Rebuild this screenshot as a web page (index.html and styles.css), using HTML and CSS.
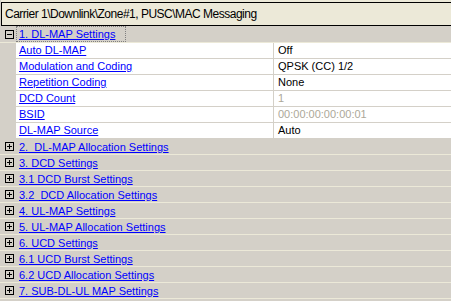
FILE: index.html
```html
<!DOCTYPE html>
<html lang="en">

<head>
    <meta charset="UTF-8">
    <title>MAC Messaging</title>
    <link rel="stylesheet" href="styles.css">
</head>

<body>
    <div class="title">Carrier 1\Downlink\Zone#1, PUSC\MAC Messaging</div>

    <div class="grid">
        <div class="cat">
            <span class="toggle"><svg width="9" height="9"><rect x="0.5" y="0.5" width="8" height="8" fill="none" stroke="#000"/><path d="M2 4.5h5" stroke="#000"/></svg></span>
            <a class="label focus" href="#">1. DL-MAP Settings</a>
        </div>
        <div class="prop">
            <span class="gutter"></span>
            <a class="name" href="#">Auto DL-MAP</a>
            <span class="value">Off</span>
        </div>
        <div class="prop">
            <span class="gutter"></span>
            <a class="name" href="#">Modulation and Coding</a>
            <span class="value">QPSK (CC) 1/2</span>
        </div>
        <div class="prop">
            <span class="gutter"></span>
            <a class="name" href="#">Repetition Coding</a>
            <span class="value">None</span>
        </div>
        <div class="prop">
            <span class="gutter"></span>
            <a class="name" href="#">DCD Count</a>
            <span class="value disabled">1</span>
        </div>
        <div class="prop">
            <span class="gutter"></span>
            <a class="name" href="#">BSID</a>
            <span class="value disabled">00:00:00:00:00:01</span>
        </div>
        <div class="prop">
            <span class="gutter"></span>
            <a class="name" href="#">DL-MAP Source</a>
            <span class="value">Auto</span>
        </div>

        <div class="cat">
            <span class="toggle"><svg width="9" height="9"><rect x="0.5" y="0.5" width="8" height="8" fill="none" stroke="#000"/><path d="M2 4.5h5M4.5 2v5" stroke="#000"/></svg></span>
            <a class="label" href="#">2.&nbsp; DL-MAP Allocation Settings</a>
        </div>
        <div class="cat">
            <span class="toggle"><svg width="9" height="9"><rect x="0.5" y="0.5" width="8" height="8" fill="none" stroke="#000"/><path d="M2 4.5h5M4.5 2v5" stroke="#000"/></svg></span>
            <a class="label" href="#">3. DCD Settings</a>
        </div>
        <div class="cat">
            <span class="toggle"><svg width="9" height="9"><rect x="0.5" y="0.5" width="8" height="8" fill="none" stroke="#000"/><path d="M2 4.5h5M4.5 2v5" stroke="#000"/></svg></span>
            <a class="label" href="#">3.1 DCD Burst Settings</a>
        </div>
        <div class="cat">
            <span class="toggle"><svg width="9" height="9"><rect x="0.5" y="0.5" width="8" height="8" fill="none" stroke="#000"/><path d="M2 4.5h5M4.5 2v5" stroke="#000"/></svg></span>
            <a class="label" href="#">3.2&nbsp; DCD Allocation Settings</a>
        </div>
        <div class="cat">
            <span class="toggle"><svg width="9" height="9"><rect x="0.5" y="0.5" width="8" height="8" fill="none" stroke="#000"/><path d="M2 4.5h5M4.5 2v5" stroke="#000"/></svg></span>
            <a class="label" href="#">4. UL-MAP Settings</a>
        </div>
        <div class="cat">
            <span class="toggle"><svg width="9" height="9"><rect x="0.5" y="0.5" width="8" height="8" fill="none" stroke="#000"/><path d="M2 4.5h5M4.5 2v5" stroke="#000"/></svg></span>
            <a class="label" href="#">5. UL-MAP Allocation Settings</a>
        </div>
        <div class="cat">
            <span class="toggle"><svg width="9" height="9"><rect x="0.5" y="0.5" width="8" height="8" fill="none" stroke="#000"/><path d="M2 4.5h5M4.5 2v5" stroke="#000"/></svg></span>
            <a class="label" href="#">6. UCD Settings</a>
        </div>
        <div class="cat">
            <span class="toggle"><svg width="9" height="9"><rect x="0.5" y="0.5" width="8" height="8" fill="none" stroke="#000"/><path d="M2 4.5h5M4.5 2v5" stroke="#000"/></svg></span>
            <a class="label" href="#">6.1 UCD Burst Settings</a>
        </div>
        <div class="cat">
            <span class="toggle"><svg width="9" height="9"><rect x="0.5" y="0.5" width="8" height="8" fill="none" stroke="#000"/><path d="M2 4.5h5M4.5 2v5" stroke="#000"/></svg></span>
            <a class="label" href="#">6.2 UCD Allocation Settings</a>
        </div>
        <div class="cat">
            <span class="toggle"><svg width="9" height="9"><rect x="0.5" y="0.5" width="8" height="8" fill="none" stroke="#000"/><path d="M2 4.5h5M4.5 2v5" stroke="#000"/></svg></span>
            <a class="label" href="#">7. SUB-DL-UL MAP Settings</a>
        </div>
    </div>
</body>

</html>
```

FILE: styles.css
```css
* {
    margin: 0;
    padding: 0;
    box-sizing: border-box;
}

body {
    width: 451px;
    height: 301px;
    overflow: hidden;
    background: #d4d0c8;
    font-family: "Liberation Sans", Arial, sans-serif;
    font-size: 11px;
    color: #000;
}

.title {
    height: 26px;
    border-top: 2px solid #ece9d8;
    background: #ece9d8;
    box-shadow: inset 1px 1px 0 #000, inset 0 -1px 0 #000;
    margin-left: 1px;
    padding: 5px 0 0 4px;
    font-size: 12px;
    letter-spacing: -0.5px;
    white-space: nowrap;
    overflow: hidden;
}

.grid {
    display: flex;
    flex-direction: column;
}

a {
    color: #0000ff;
    text-decoration: underline;
}

.cat {
    height: 16px;
    display: flex;
    align-items: center;
    border-bottom: 1px solid #ece9d8;
}

.cat:first-child {
    height: 17px;
}

.toggle {
    width: 19px;
    padding-left: 5px;
    display: flex;
    align-items: center;
}

.label {
    white-space: pre;
    line-height: 14px;
}

.focus {
    outline: 1px dotted #808080;
    outline-offset: 0;
    padding-right: 10px;
    margin-left: -2px;
    padding-left: 2px;
}

.prop {
    height: 16px;
    display: grid;
    grid-template-columns: 16px 258px 1fr;
}

.gutter {
    background: #d4d0c8;
}

.name,
.value {
    background: #fff;
    border-bottom: 1px solid #d4d0c8;
    line-height: 15px;
    white-space: nowrap;
    overflow: hidden;
}

.name {
    padding-left: 3px;
    border-right: 1px solid #d4d0c8;
}

.value {
    padding-left: 4px;
}

.disabled {
    color: #aca899;
}
```
